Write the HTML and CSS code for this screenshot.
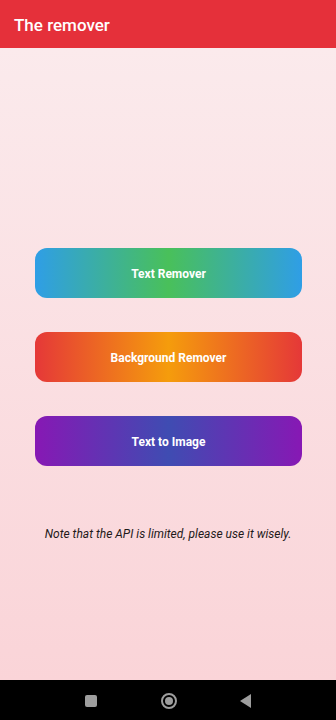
FILE: index.html
```html
<!DOCTYPE html>
<html>
<head>
<meta charset="utf-8">
<link rel="stylesheet" href="styles.css">
</head>
<body>
<div class="screen">
  <header class="appbar">The remover</header>
  <main class="content">
    <div class="buttons">
      <button class="btn btn-text">Text Remover</button>
      <button class="btn btn-bg">Background Remover</button>
      <button class="btn btn-img">Text to Image</button>
    </div>
    <p class="note">Note that the API is limited, please use it wisely.</p>
  </main>
  <nav class="navbar">
    <span class="nav-square"></span>
    <span class="nav-home"><span class="nav-dot"></span></span>
    <svg class="nav-back" width="12" height="14" viewBox="0 0 12 14"><polygon points="11,0 11,14 0,7" fill="#9e9e9e"/></svg>
  </nav>
</div>
</body>
</html>
```
FILE: styles.css
```css
* { box-sizing: border-box; }
html, body { margin: 0; padding: 0; }
body { font-family: Roboto, "Noto Sans", sans-serif; }
.screen {
  width: 336px;
  height: 720px;
  display: flex;
  flex-direction: column;
}
.appbar {
  height: 48px;
  background: #e5303a;
  color: #fff;
  font-size: 17px;
  font-weight: 500;
  display: flex;
  align-items: center;
  padding-left: 14px;
  padding-top: 2px;
}
.content {
  flex: 1;
  background: linear-gradient(to bottom, #fbeaec, #fad4d8);
  display: flex;
  flex-direction: column;
  align-items: center;
  padding-top: 200px;
}
.buttons {
  display: flex;
  flex-direction: column;
  gap: 34px;
}
.btn {
  width: 267px;
  height: 50px;
  border: none;
  border-radius: 12px;
  color: #fff;
  font-family: Roboto, sans-serif;
  font-size: 12px;
  font-weight: 700;
  margin-left: 1px;
  padding: 1px 0 0;
}
.btn-text { background: linear-gradient(to right, #2f9ee6, #49c05a 50%, #2f9ee6); }
.btn-bg { background: linear-gradient(to right, #e53838, #f59c0c 50%, #e53838); }
.btn-img { background: linear-gradient(to right, #8718b4, #3f4cb2 50%, #8718b4); }
.note {
  margin: 61px 0 0;
  font-size: 12px;
  font-style: italic;
  color: #1f1a1a;
}
.navbar {
  height: 40px;
  background: #000;
  display: flex;
  align-items: center;
  justify-content: center;
  gap: 0;
  padding-top: 1px;
}
.nav-square {
  width: 12px;
  height: 12px;
  background: #9e9e9e;
  border-radius: 2px;
  margin-right: 64px;
}
.nav-home {
  width: 16px;
  height: 16px;
  border: 2px solid #9e9e9e;
  border-radius: 50%;
  display: flex;
  align-items: center;
  justify-content: center;
  margin-right: 63px;
}
.nav-dot {
  width: 8px;
  height: 8px;
  background: #9e9e9e;
  border-radius: 50%;
}
```
